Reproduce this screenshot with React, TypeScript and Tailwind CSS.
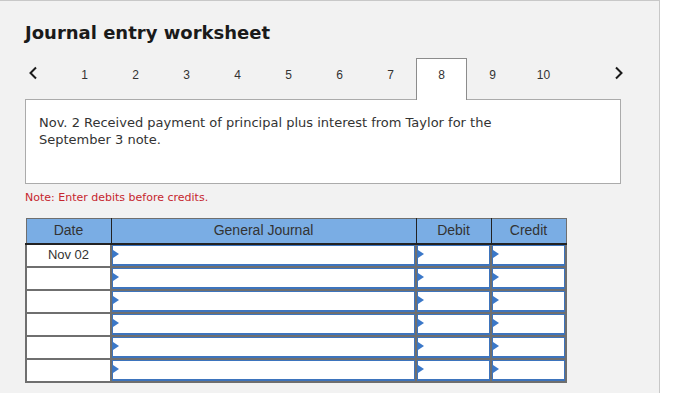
const steps = [1, 2, 3, 4, 5, 6, 7, 8, 9, 10];
const rows = ["Nov 02", "", "", "", "", ""];

function Chevron({ dir }: { dir: "left" | "right" }) {
  return (
    <svg width="10" height="14" viewBox="0 0 10 14" fill="none">
      <polyline
        points={dir === "left" ? "8,1.5 2.5,7 8,12.5" : "2,1.5 7.5,7 2,12.5"}
        stroke="#1a1a1a"
        strokeWidth="2"
      />
    </svg>
  );
}

function Marker() {
  return (
    <svg className="absolute left-0 top-[4px]" width="6" height="8" viewBox="0 0 6 8">
      <polygon points="0,0 6,4 0,8" fill="#3b78c8" />
    </svg>
  );
}

function InputCell({ width }: { width: string }) {
  return (
    <td className={`${width} h-[23px] p-0 border-2 border-[#6f6f6f] bg-[#6f6f6f]`}>
      <div className="relative h-full bg-white border border-[#3d74bd] border-b-2">
        <Marker />
      </div>
    </td>
  );
}

export default function App() {
  return (
    <div className="w-[699px] h-[393px] bg-white overflow-hidden">
      <div className="w-[660px] h-[393px] bg-[#f2f2f2] border-t border-r border-[#c8c8c8] pt-[21px]">
        <h1 className="ml-[25px] font-['DejaVu_Sans',sans-serif] font-bold text-[18px] leading-[22px] text-[#1a1a1a]">
          Journal entry worksheet
        </h1>

        {/* step tabs */}
        <div className="ml-[25px] mt-[14px] flex items-end h-[41px] font-['Liberation_Sans',Arial,sans-serif] text-[12px] text-[#333]">
          <div className="w-[34px] h-[41px] flex items-start pt-[8px] pl-[3px]">
            <Chevron dir="left" />
          </div>
          {steps.map((n) =>
            n === 8 ? (
              <div
                key={n}
                className="relative z-10 -mb-px w-[51px] h-[42px] flex justify-center pt-[7px] bg-white border border-b-0 border-[#8c8c8c]"
              >
                {n}
              </div>
            ) : (
              <div key={n} className="w-[51px] h-[41px] flex justify-center pt-[8px]">
                {n}
              </div>
            )
          )}
          <div className="w-[55px] h-[41px] flex items-start pt-[8px] justify-end">
            <Chevron dir="right" />
          </div>
        </div>

        <div className="ml-[25px] w-[596px] h-[85px] bg-white border border-[#ababab] px-[13px] pt-[14px] font-['DejaVu_Sans',sans-serif] text-[13px] leading-[17px] text-[#333]">
          Nov. 2 Received payment of principal plus interest from Taylor for the
          <br />
          September 3 note.
        </div>

        <p className="ml-[25px] mt-[7px] font-['DejaVu_Sans',sans-serif] text-[11px] leading-[14px] text-[#c6262e]">
          Note: Enter debits before credits.
        </p>

        <table className="ml-[25px] mt-[13px] border-collapse font-['Liberation_Sans',Arial,sans-serif] text-[14px] text-[#333]">
          <thead>
            <tr className="h-[25px] bg-[#7aade4]">
              <th className="w-[85px] font-normal border border-[#6f6f6f] border-r-[#222] border-b-[#222] border-b-2">Date</th>
              <th className="w-[305px] font-normal border border-[#6f6f6f] border-r-[#222] border-b-[#222] border-b-2">General Journal</th>
              <th className="w-[75px] font-normal border border-[#6f6f6f] border-r-[#222] border-b-[#222] border-b-2">Debit</th>
              <th className="w-[75px] font-normal border border-[#6f6f6f] border-b-[#222] border-b-2">Credit</th>
            </tr>
          </thead>
          <tbody>
            {rows.map((d, i) => (
              <tr key={i}>
                <td className="w-[85px] h-[23px] p-0 bg-white border-2 border-[#6f6f6f] text-center align-top text-[13px] leading-[20px]">
                  {d}
                </td>
                <InputCell width="w-[305px]" />
                <InputCell width="w-[75px]" />
                <InputCell width="w-[75px]" />
              </tr>
            ))}
          </tbody>
        </table>
      </div>
    </div>
  );
}
